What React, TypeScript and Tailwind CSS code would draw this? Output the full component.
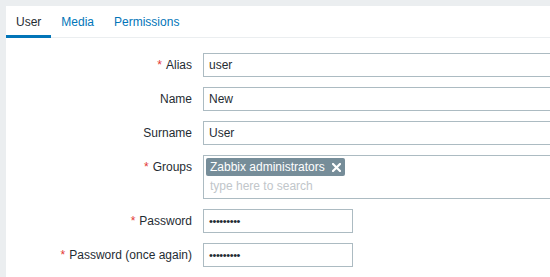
import React from 'react';

const Req = () => <span className="text-[#e33734] mr-[4px]">*</span>;

const rows = [
  { label: 'Alias', req: true, value: 'user' },
  { label: 'Name', req: false, value: 'New' },
  { label: 'Surname', req: false, value: 'User' },
];

const Label: React.FC<{ req?: boolean; children: React.ReactNode }> = ({ req, children }) => (
  <div className="text-right leading-[24px] text-[#1f2c33]">
    {req && <Req />}
    {children}
  </div>
);

const App: React.FC = () => {
  return (
    <div
      className="min-h-[277px] bg-[#ebeef0] pl-[6px] pt-[6px] overflow-hidden text-[12px]"
      style={{ fontFamily: '"Liberation Sans", Arial, sans-serif' }}
    >
      <div className="bg-white min-h-[271px] w-[700px]">
        <div className="flex border-b border-[#ebeef0] h-[32px]">
          <div className="h-[32px] -mb-px px-[10px] pt-[9px] leading-[14px] border-b-[3px] border-[#0275b8] text-[#1f2c33]">User</div>
          <div className="h-[32px] -mb-px px-[10px] pt-[9px] leading-[14px] text-[#0275b8]">Media</div>
          <div className="h-[32px] -mb-px px-[10px] pt-[9px] leading-[14px] text-[#0275b8]">Permissions</div>
        </div>

        <div className="grid grid-cols-[186px_1fr] gap-x-[11px] gap-y-[10px] pt-[15px]">
          {rows.map(r => (
            <React.Fragment key={r.label}>
              <Label req={r.req}>{r.label}</Label>
              <div className="h-[24px] w-[453px] border border-[#acbbc2] px-[5px] leading-[22px] text-[#1f2c33]">{r.value}</div>
            </React.Fragment>
          ))}

          <Label req>Groups</Label>
          <div className="h-[44px] w-[453px] border border-[#acbbc2] px-[2px] pt-[2px]">
            <div className="inline-flex items-center h-[18px] bg-[#768d99] rounded-[2px] pl-[4px] pr-[4px] text-white leading-[18px]">
              Zabbix administrators
              <svg className="ml-[7px]" width="9" height="9" viewBox="0 0 9 9">
                <path d="M1 1 L8 8 M8 1 L1 8" stroke="white" strokeWidth="2.2" strokeLinecap="square" />
              </svg>
            </div>
            <div className="pl-[4px] leading-[20px] text-[#c1c6ca]">type here to search</div>
          </div>

          <Label req>Password</Label>
          <div className="h-[24px] w-[150px] border border-[#acbbc2] px-[5px] leading-[22px] text-[#1f2c33] text-[11px] tracking-[-0.4px]">•••••••••</div>

          <Label req>Password (once again)</Label>
          <div className="h-[24px] w-[150px] border border-[#acbbc2] px-[5px] leading-[22px] text-[#1f2c33] text-[11px] tracking-[-0.4px]">•••••••••</div>
        </div>
      </div>
    </div>
  );
};

export default App;
